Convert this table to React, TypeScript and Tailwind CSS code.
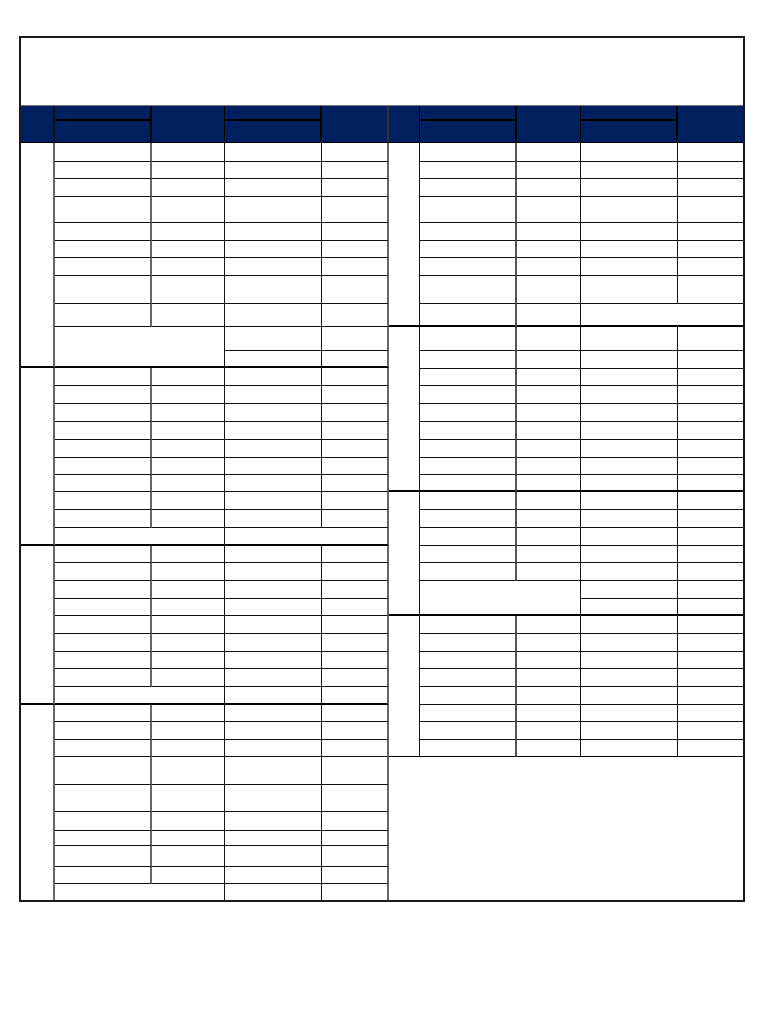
import React from "react";

const H: Record<number, string> = {
  15: "h-[15px]",
  16: "h-[16px]",
  17: "h-[17px]",
  18: "h-[18px]",
  19: "h-[19px]",
  21: "h-[21px]",
  23: "h-[23px]",
  24: "h-[24px]",
  26: "h-[26px]",
  27: "h-[27px]",
  28: "h-[28px]",
};

const BB = "border-b border-b-[#111]";
const BB2 = "border-b-2 border-b-[#000]";

const LC = [
  "w-[97px] border-r-2 border-r-[#666]",
  "w-[73px] border-r border-r-[#111]",
  "w-[97px] border-r border-r-[#111]",
  "w-[67px] border-r-2 border-r-[#666]",
];
const RC = [
  "w-[97px] border-r-2 border-r-[#555]",
  "w-[64px] border-r border-r-[#111]",
  "w-[97px] border-r border-r-[#111]",
  "w-[65px]",
];

function Row({ h, cols, last, none }: { h: number; cols: string[]; last?: boolean; none?: boolean }) {
  const b = none ? "" : last ? BB2 : BB;
  return (
    <div className={`flex ${H[h]}`}>
      {cols.map((c, i) => (
        <div key={i} className={`shrink-0 ${c} ${b}`} />
      ))}
    </div>
  );
}

function Section({ group, bottom, children }: { group: string; bottom: string; children: React.ReactNode }) {
  return (
    <div className="flex">
      <div className={`shrink-0 ${group} ${bottom}`} />
      <div className="flex flex-col">{children}</div>
    </div>
  );
}

const LG = "w-[34px] border-r-2 border-r-[#666]";
const RG = "w-[31px] border-r border-r-[#111]";

function rows(hs: number[], cols: string[]) {
  return hs.map((h, i) => <Row key={i} h={h} cols={cols} />);
}

function LeftHalf() {
  return (
    <div className="flex w-[368px] shrink-0 flex-col">
      <Section group={LG} bottom={BB2}>
        {rows([19, 17, 18, 26, 18, 17, 18, 28, 23], LC)}
        <div className="flex h-[41px]">
          <div className={`w-[170px] shrink-0 border-r border-r-[#111] ${BB2}`} />
          <div className="flex flex-col">
            <Row h={24} cols={[LC[2], LC[3]]} />
            <Row h={17} cols={[LC[2], LC[3]]} last />
          </div>
        </div>
      </Section>
      <Section group={LG} bottom={BB2}>
        {rows([18, 18, 18, 18, 18, 17, 17, 18, 18], LC)}
        <Row
          h={18}
          cols={["w-[170px] border-r border-r-[#111]", "w-[164px] border-r-2 border-r-[#666]"]}
          last
        />
      </Section>
      <Section group={LG} bottom={BB2}>
        {rows([17, 18, 18, 17, 18, 18, 17, 18], LC)}
        <Row h={18} cols={["w-[170px] border-r border-r-[#111]", LC[2], LC[3]]} last />
      </Section>
      <Section group={LG} bottom="">
        {rows([17, 18, 17, 28, 27, 19, 15, 21, 17], LC)}
        <Row h={16} cols={["w-[170px] border-r border-r-[#111]", LC[2], LC[3]]} none />
      </Section>
    </div>
  );
}

function RightHalf() {
  return (
    <div className="flex w-[354px] shrink-0 flex-col">
      <Section group={RG} bottom={BB2}>
        {rows([19, 17, 18, 26, 18, 17, 18, 28], RC)}
        <Row h={23} cols={[RC[0], RC[1], "w-[162px]"]} last />
      </Section>
      <Section group={RG} bottom={BB2}>
        {rows([24, 18, 17, 18, 18, 18, 18, 17], RC)}
        <Row h={17} cols={RC} last />
      </Section>
      <Section group={RG} bottom={BB2}>
        {rows([18, 18, 18, 17, 18], RC)}
        <div className="flex h-[35px]">
          <div className={`w-[161px] shrink-0 border-r border-r-[#111] ${BB2}`} />
          <div className="flex flex-col">
            <Row h={18} cols={[RC[2], RC[3]]} />
            <Row h={17} cols={[RC[2], RC[3]]} last />
          </div>
        </div>
      </Section>
      <Section group={RG} bottom="border-b border-b-[#000]">
        {rows([18, 18, 17, 18, 18, 17, 18], RC)}
        <div className="flex h-[17px]">
          {RC.map((c, i) => (
            <div key={i} className={`shrink-0 ${c} border-b border-b-[#000]`} />
          ))}
        </div>
      </Section>
      <div className="h-[143px]" />
    </div>
  );
}

function HeaderSplit({ w, right }: { w: string; right: string }) {
  return (
    <div className={`flex shrink-0 flex-col ${w} ${right}`}>
      <div className="h-[15px] border-b-2 border-b-[#000]" />
      <div className="flex-1" />
    </div>
  );
}

function Header() {
  return (
    <div className="flex h-[37px] border-b border-b-[#000] bg-[#002060]">
      <div className="w-[34px] shrink-0 border-r-2 border-r-[#111]" />
      <HeaderSplit w="w-[97px]" right="border-r-2 border-r-[#000]" />
      <div className="w-[73px] shrink-0 border-r border-r-[#000]" />
      <HeaderSplit w="w-[97px]" right="border-r-2 border-r-[#000]" />
      <div className="w-[67px] shrink-0 border-r-2 border-r-[#333]" />
      <div className="w-[31px] shrink-0 border-r border-r-[#000]" />
      <HeaderSplit w="w-[97px]" right="border-r-2 border-r-[#000]" />
      <div className="w-[64px] shrink-0 border-r border-r-[#000]" />
      <HeaderSplit w="w-[97px]" right="border-r-2 border-r-[#000]" />
      <div className="w-[65px] shrink-0" />
    </div>
  );
}

export default function App() {
  return (
    <div className="h-[1024px] w-[768px] bg-white pl-[19px] pt-[36px]" style={{ fontFamily: "'Liberation Sans', sans-serif" }}>
      <div className="w-[726px] border-2 border-[#1a1a1a] bg-white">
        <div className="h-[68px] border-b border-b-[#777]" />
        <Header />
        <div className="flex">
          <LeftHalf />
          <RightHalf />
        </div>
      </div>
    </div>
  );
}
